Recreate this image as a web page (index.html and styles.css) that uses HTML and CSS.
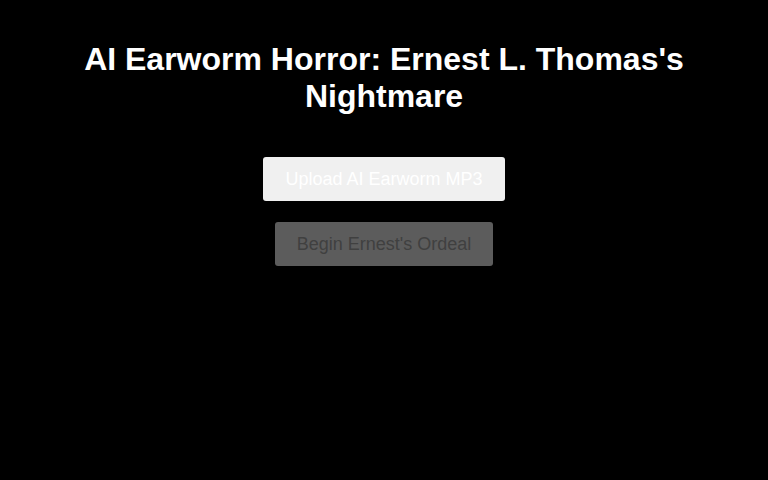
FILE: index.html
```html
<!DOCTYPE html>
<html lang="en">
<head>
    <meta charset="UTF-8">
    <meta name="viewport" content="width=device-width, initial-scale=1.0">
    <title>AI Earworm Horror</title>
    <link rel="stylesheet" href="styles.css">
</head>
<body>
    <h1>AI Earworm Horror: Ernest L. Thomas's Nightmare</h1>

    <div class="controls">
        <label class="btn upload-btn" for="mp3">Upload AI Earworm MP3</label>
        <input type="file" id="mp3" accept="audio/mpeg">
        <button class="btn start-btn" disabled>Begin Ernest's Ordeal</button>
    </div>
</body>
</html>
```

FILE: styles.css
```css
body {
    font-family: 'Liberation Sans', Arial, sans-serif;
    background-color: #000;
    color: #fff;
    margin: 0;
    padding: 20px;
    text-align: center;
}
h1 {
    font-size: 32px;
    margin: 21px 0;
}
.controls {
    display: flex;
    flex-direction: column;
    align-items: center;
    gap: 21px;
    padding-top: 21px;
}
.btn {
    font-family: inherit;
    font-size: 18px;
    line-height: 20px;
    padding: 12px 22px;
    border: none;
    border-radius: 3px;
    white-space: nowrap;
}
.upload-btn {
    background-color: #f0f0f0;
    color: #fff;
}
.start-btn {
    background-color: #5c5c5c;
    color: #404040;
}
#mp3 {
    display: none;
}
```
